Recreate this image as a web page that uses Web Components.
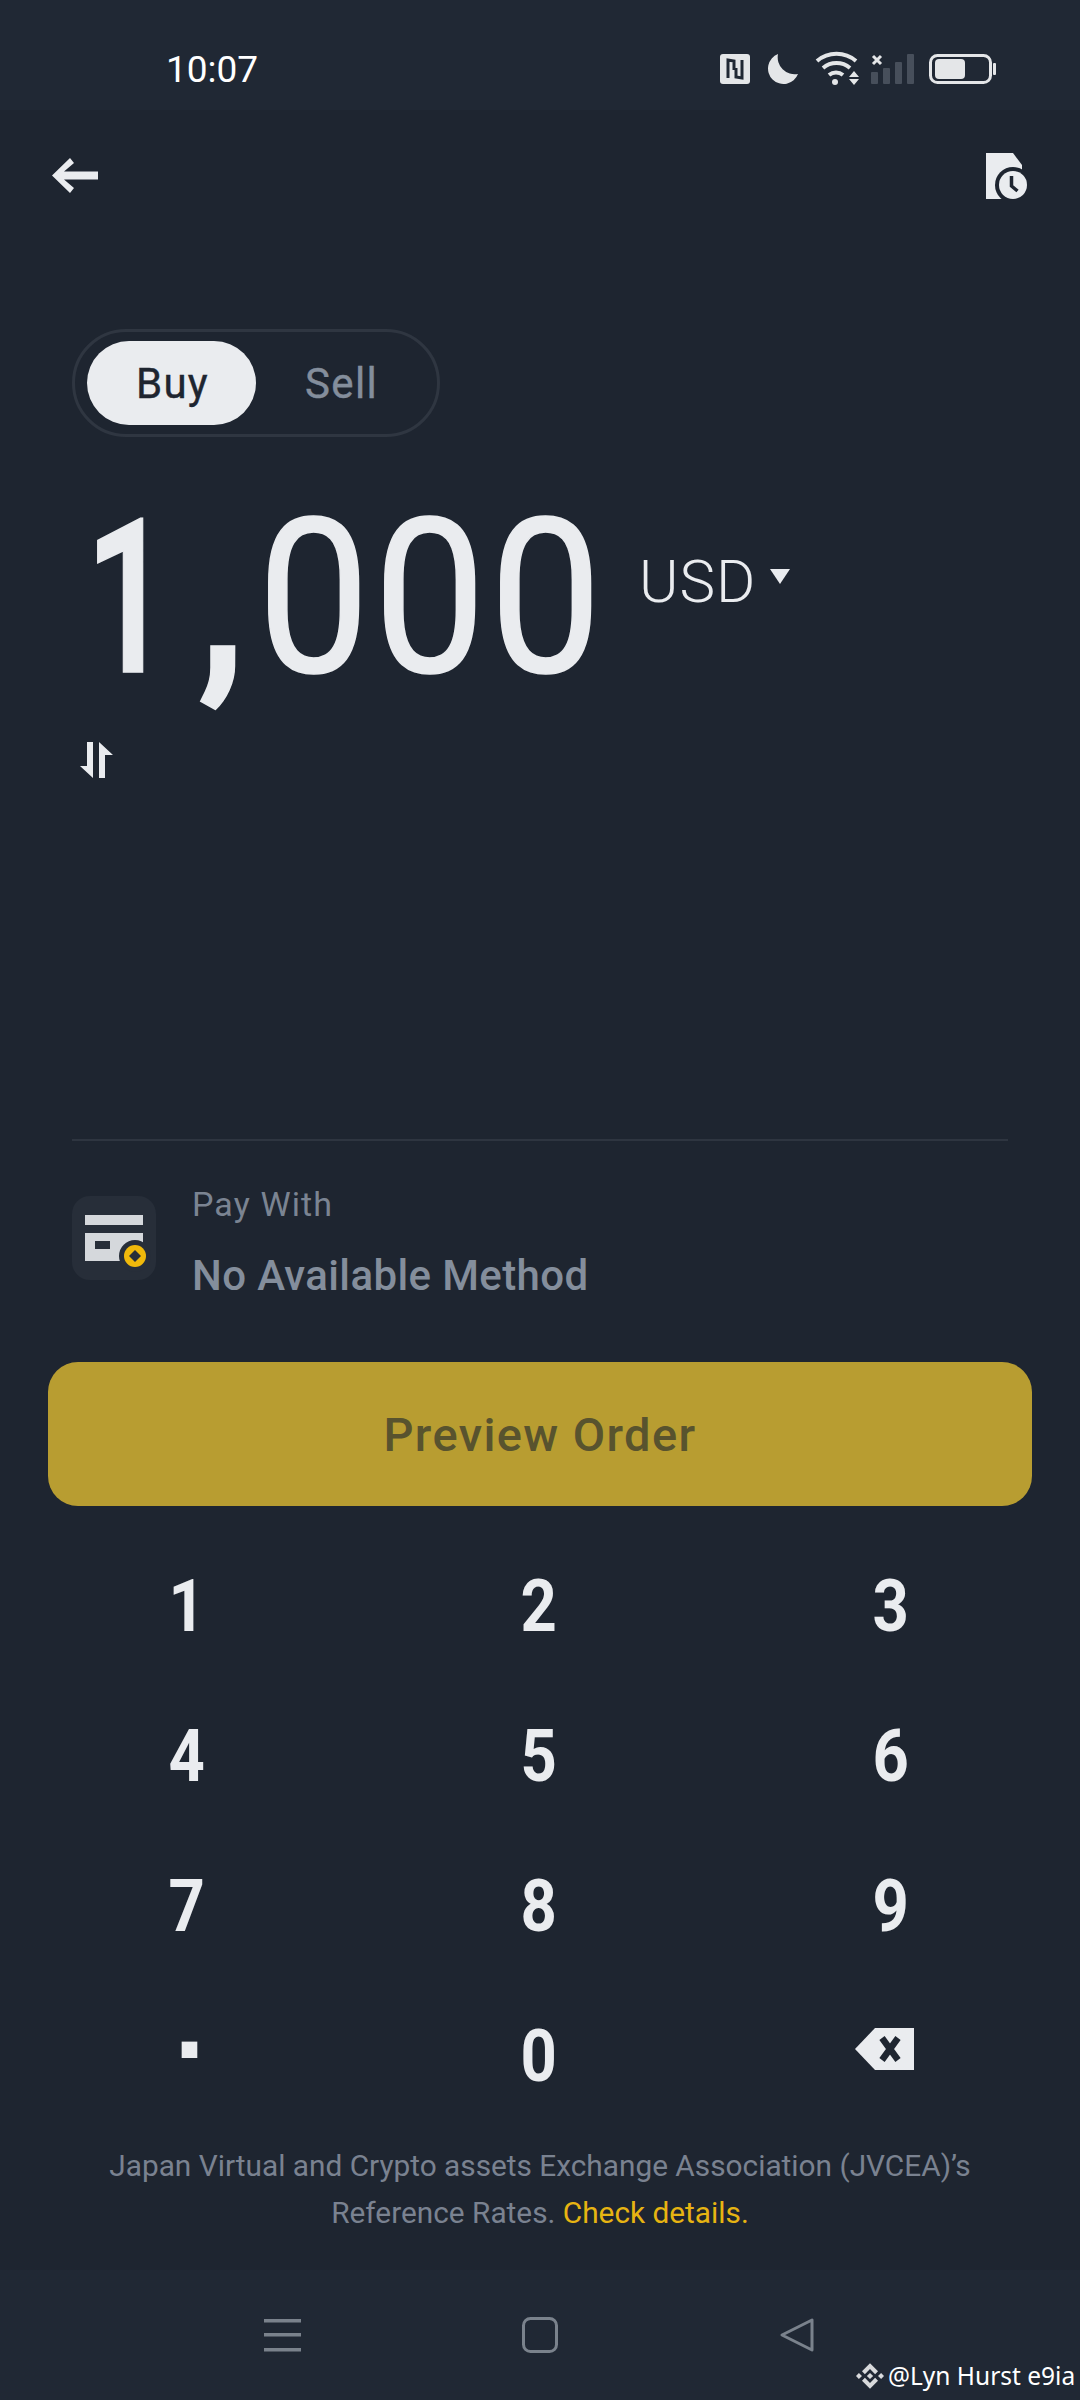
<!DOCTYPE html>
<html>
<head>
<meta charset="utf-8">
<title>Buy</title>
<style>
  html, body { margin: 0; padding: 0; background: #1e2530; }
  body { width: 1080px; height: 2400px; overflow: hidden; font-family: Roboto, "Noto Sans", sans-serif; position: relative; }
  .app { display: flex; flex-direction: column; width: 1080px; height: 2400px; }
</style>
</head>
<body>
<div class="app">
  <status-bar></status-bar>
  <top-nav></top-nav>
  <side-toggle></side-toggle>
  <amount-display></amount-display>
  <pay-method></pay-method>
  <primary-button>Preview Order</primary-button>
  <key-pad></key-pad>
  <rate-note></rate-note>
  <nav-bar></nav-bar>
</div>
<water-mark>@Lyn Hurst e9ia</water-mark>

<script>
class StatusBar extends HTMLElement {
  connectedCallback () {
    this.attachShadow({ mode: 'open' }).innerHTML = /*html*/`
    <style>
      :host { display: flex; align-items: center; height: 110px; background: #202834; box-sizing: border-box; padding: 28px 83px 0 166px; justify-content: space-between; }
      .time { font: 400 37px/1 Roboto, sans-serif; color: #fff; margin-top: 1px; }
      .icons { display: flex; align-items: center; }
      svg { display: block; }
    </style>
    <span class="time">10:07</span>
    <div class="icons">
      <svg width="277" height="36" viewBox="721 51 277 36">
        <rect x="721" y="54" width="30" height="30" rx="3" fill="#e4e6e8"/>
        <path d="M729 78V60l6 1v9M743 60v18l-6-1v-9" fill="none" stroke="#202834" stroke-width="3"/>
        <path d="M779 54a15.500 15.500 0 1 0 20 20a17 17 0 0 1-20-20z" fill="#e4e6e8"/>
        <path d="M818 61a30 30 0 0 1 39 0M824 68a21 21 0 0 1 27 0M830 75a11 11 0 0 1 14 0" fill="none" stroke="#e4e6e8" stroke-width="4"/>
        <circle cx="836" cy="82" r="3" fill="#e4e6e8"/>
        <path d="M855 71l5 6h-10zM855 85l5-6h-10z" fill="#e4e6e8"/>
        <path d="M874 56l8 8M882 56l-8 8" stroke="#e4e6e8" stroke-width="3"/>
        <rect x="872" y="72" width="7" height="12" rx="1" fill="#474f5b"/>
        <rect x="884" y="68" width="7" height="16" rx="1" fill="#474f5b"/>
        <rect x="896" y="62" width="7" height="22" rx="1" fill="#474f5b"/>
        <rect x="908" y="54" width="7" height="30" rx="1" fill="#474f5b"/>
        <rect x="931.500" y="55.500" width="60" height="27" rx="7" fill="none" stroke="#e4e6e8" stroke-width="3"/>
        <rect x="936" y="59" width="30" height="20" rx="4" fill="#e4e6e8"/>
        <rect x="994" y="63" width="3" height="12" rx="1" fill="#e4e6e8"/>
      </svg>
    </div>`
  }
}

class TopNav extends HTMLElement {
  connectedCallback () {
    this.attachShadow({ mode: 'open' }).innerHTML = /*html*/`
    <style>
      :host { display: flex; justify-content: space-between; align-items: flex-start; height: 132px; box-sizing: border-box; padding: 43px 52px 0 52px; }
      svg { display: block; }
    </style>
    <svg width="46" height="36" viewBox="0 0 46 36" style="margin-top:5px"><path d="M0 17.500L18 0l4 5-10 8.500h34v8H12l10 8.500-4 5z" fill="#eaecef"/></svg>
    <svg width="42" height="46" viewBox="0 0 42 46">
      <path d="M0 0h27l9 12v34H0z" fill="#eaecef"/>
      <circle cx="27" cy="32" r="18" fill="#1e2530"/>
      <circle cx="27" cy="32" r="14" fill="#eaecef"/>
      <path d="M25.500 23v10l6 5" fill="none" stroke="#1e2530" stroke-width="3.500"/>
    </svg>`
  }
}

class SideToggle extends HTMLElement {
  connectedCallback () {
    this.attachShadow({ mode: 'open' }).innerHTML = /*html*/`
    <style>
      :host { display: flex; width: 368px; height: 108px; box-sizing: border-box; margin: 87px 0 0 72px; padding: 9px 12px; border: 3px solid #2f3641; border-radius: 54px; font: 400 42px/1 Roboto, sans-serif; letter-spacing: 1.300px; }
      .opt { width: 170px; display: flex; align-items: center; justify-content: center; border-radius: 42px; color: #848e9c; padding: 2px 0 0 2px; box-sizing: border-box; -webkit-text-stroke: .4px currentColor; }
      .opt.on { background: #eaecef; color: #1e2530; }
    </style>
    <div class="opt on">Buy</div>
    <div class="opt">Sell</div>`
  }
}

class AmountDisplay extends HTMLElement {
  connectedCallback () {
    this.attachShadow({ mode: 'open' }).innerHTML = /*html*/`
    <style>
      :host { display: block; box-sizing: border-box; height: 702px; padding: 54px 0 0 72px; color: #eaecef; }
      .row { display: flex; align-items: flex-start; height: 215px; }
      .num { font: 400 215px/1 Roboto, sans-serif; width: 572px; margin-left: -5px; white-space: nowrap; transform: scaleX(.93); transform-origin: left top; flex: none; letter-spacing: 3.900px; -webkit-text-stroke: 1.500px #eaecef; }
      .one { display: inline-block; letter-spacing: 0; margin-right: 17px; font-weight: 600; transform: translateX(-11px) scaleX(.75); transform-origin: right center; }
      .comma { letter-spacing: 12px; font-weight: 700; }
      .cur { font: 300 60px/1 Roboto, sans-serif; letter-spacing: 1px; display: flex; align-items: flex-start; padding-top: 61px; }
      .cur svg { margin: 17px 0 0 14px; }
      .swap { display: block; margin: 36px 0 0 7px; }
    </style>
    <div class="row">
      <span class="num"><span class="one">1</span><span class="comma">,</span>000</span>
      <span class="cur">USD<svg width="20" height="15" viewBox="0 0 20 15"><path d="M0 0h20l-10 15z" fill="#eaecef"/></svg></span>
    </div>
    <svg class="swap" width="34" height="36" viewBox="0 0 34 36" fill="#eaecef">
      <path d="M8 0h6v36L1 24h7zM20 36V0l14 13h-8v23z"/>
    </svg>`
  }
}

class PayMethod extends HTMLElement {
  connectedCallback () {
    this.attachShadow({ mode: 'open' }).innerHTML = /*html*/`
    <style>
      :host { display: block; margin: 0 72px; border-top: 2px solid #2e3540; height: 223px; box-sizing: border-box; padding-top: 43px; flex: none; }
      .wrap { display: flex; gap: 37px; align-items: flex-start; }
      svg { display: block; margin-top: 12px; flex: none; }
      .label { font: 400 34px/40px Roboto, sans-serif; color: #7b8492; letter-spacing: 1.100px; margin-left: -1px; }
      .value { font: 500 42px/48px Roboto, sans-serif; color: #848e9c; margin: 28px 0 0 -1px; letter-spacing: .370px; }
    </style>
    <div class="wrap">
      <svg width="84" height="84" viewBox="0 0 84 84">
        <rect width="84" height="84" rx="18" fill="#272e39"/>
        <rect x="13" y="19" width="58" height="10" fill="#d5d8dc"/>
        <rect x="13" y="37" width="58" height="28" fill="#d5d8dc"/>
        <rect x="23" y="45" width="15" height="8" fill="#272e39"/>
        <circle cx="63" cy="60" r="16" fill="#272e39"/>
        <circle cx="63" cy="60" r="11" fill="#f0b90b"/>
        <path d="M63 54l6 6-6 6-6-6z" fill="#272e39"/>
      </svg>
      <div>
        <div class="label">Pay With</div>
        <div class="value">No Available Method</div>
      </div>
    </div>`
  }
}

class PrimaryButton extends HTMLElement {
  connectedCallback () {
    this.attachShadow({ mode: 'open' }).innerHTML = /*html*/`
    <style>
      :host { display: flex; align-items: center; justify-content: center; height: 144px; margin: 0 48px; background: #b89d31; border-radius: 30px; color: #58532e; font: 500 47px/1 Roboto, sans-serif; letter-spacing: 1.400px; flex: none; }
    </style>
    <slot></slot>`
  }
}

class KeyPad extends HTMLElement {
  connectedCallback () {
    const keys = ['1','2','3','4','5','6','7','8','9','.','0']
    const cells = keys.map(k => k === '.'
      ? '<div class="key dot"><span>.</span></div>'
      : `<div class="key"><span>${k}</span></div>`).join('')
    this.attachShadow({ mode: 'open' }).innerHTML = /*html*/`
    <style>
      :host { display: grid; grid-template-columns: repeat(3, 352px); grid-auto-rows: 150px; padding: 26px 0 0 11px; color: #eaecef; }
      .key { display: flex; align-items: center; justify-content: center; font: 700 72px/1 Roboto, sans-serif; }
      .key span { display: block; transform: scaleX(.88); }
      .dot { font: 700 110px/1 "Liberation Sans", sans-serif; padding: 0 0 74px 5px; box-sizing: border-box; }
      .dot span { transform: none; }
      .back { display: flex; align-items: center; justify-content: center; padding: 0 14px 16px 0; box-sizing: border-box; }
      svg { display: block; }
    </style>
    ${cells}
    <div class="back">
      <svg width="59" height="42" viewBox="0 0 59 42">
        <path d="M20 0h39v42H20L0 21z" fill="#eaecef"/>
        <path d="M27 10l16 22M43 10L27 32" stroke="#1e2530" stroke-width="6.500" fill="none"/>
      </svg>
    </div>`
  }
}

class RateNote extends HTMLElement {
  connectedCallback () {
    this.attachShadow({ mode: 'open' }).innerHTML = /*html*/`
    <style>
      :host { display: block; text-align: center; font: 400 29.800px/47px Roboto, sans-serif; color: #7a8290; padding-top: 10px; height: 138px; box-sizing: border-box; flex: none; }
      a { color: #e7b412; text-decoration: none; }
    </style>
    Japan Virtual and Crypto assets Exchange Association (JVCEA)’s<br>
    Reference Rates. <a>Check details.</a>`
  }
}

class NavBar extends HTMLElement {
  connectedCallback () {
    this.attachShadow({ mode: 'open' }).innerHTML = /*html*/`
    <style>
      :host { display: flex; flex: 1; background: #202834; align-items: flex-start; justify-content: flex-start; box-sizing: border-box; padding: 47px 0 0 264px; gap: 221px; }
      svg { display: block; }
    </style>
    <svg width="37" height="36" viewBox="0 0 37 36"><path d="M0 2h37v3.500H0zM0 16h37v3.500H0zM0 31h37v3.500H0z" fill="#7a828c"/></svg>
    <svg width="36" height="36" viewBox="0 0 36 36"><rect x="1.500" y="1.500" width="33" height="33" rx="7" fill="none" stroke="#7a828c" stroke-width="3"/></svg>
    <svg width="36" height="36" viewBox="0 0 36 36"><path d="M33 3v30L3 18z" fill="none" stroke="#7a828c" stroke-width="3" stroke-linejoin="round"/></svg>`
  }
}

class WaterMark extends HTMLElement {
  connectedCallback () {
    this.attachShadow({ mode: 'open' }).innerHTML = /*html*/`
    <style>
      :host { position: absolute; left: 856px; top: 2361px; display: flex; align-items: center; gap: 4px; color: #fff; font: 400 24.500px/30px "Noto Sans", Roboto, sans-serif; white-space: nowrap; }
      svg { display: block; }
    </style>
    <svg width="28" height="28" viewBox="0 0 126 126" fill="#d8dadc">
      <path d="M63 6l36 36-13 13-23-23-23 23-13-13zM63 120L27 84l13-13 23 23 23-23 13 13zM63 49l14 14-14 14-14-14zM13 49l14 14-14 14-13-14zM113 49l13 14-13 14-14-14z"/>
    </svg>
    <slot></slot>`
  }
}

customElements.define('status-bar', StatusBar)
customElements.define('top-nav', TopNav)
customElements.define('side-toggle', SideToggle)
customElements.define('amount-display', AmountDisplay)
customElements.define('pay-method', PayMethod)
customElements.define('primary-button', PrimaryButton)
customElements.define('key-pad', KeyPad)
customElements.define('rate-note', RateNote)
customElements.define('nav-bar', NavBar)
customElements.define('water-mark', WaterMark)
</script>
</body>
</html>
